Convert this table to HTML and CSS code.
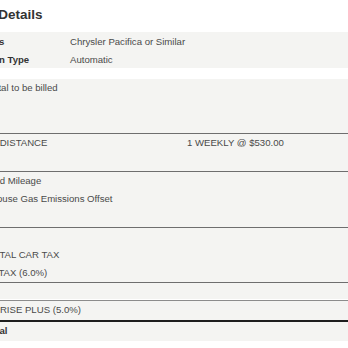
FILE: index.html
```html
<!DOCTYPE html>
<html lang="en">
<head>
<meta charset="utf-8">
<title>Vehicle Details</title>
<link rel="stylesheet" href="styles.css">
</head>
<body>
<div class="page">
  <h2 class="title">Vehicle Details</h2>

  <div class="panel vehicle">
    <div class="label strong">Vehicle Class</div>
    <div class="value">Chrysler Pacifica or Similar</div>
    <div class="label strong">Transmission Type</div>
    <div class="value">Automatic</div>
  </div>

  <div class="panel charges">
    <div class="summary">Final Total to be billed</div>

    <div class="group">
      <div class="row"><span class="label">TIME &amp; DISTANCE</span><span class="value">1 WEEKLY @ $530.00</span></div>
      <div class="row blank tall"></div>
    </div>

    <div class="group">
      <div class="row"><span class="label">Unlimited Mileage</span><span class="value"></span></div>
      <div class="row"><span class="label">Greenhouse Gas Emissions Offset</span><span class="value"></span></div>
      <div class="row blank tall"></div>
    </div>

    <div class="group">
      <div class="row blank"></div>
      <div class="row"><span class="label">PA RENTAL CAR TAX</span><span class="value"></span></div>
      <div class="row"><span class="label">SALES TAX (6.0%)</span><span class="value"></span></div>
    </div>

    <div class="group">
      <div class="row blank short"></div>
    </div>

    <div class="group g-fee">
      <div class="row tall"><span class="label fee">ENTERPRISE PLUS (5.0%)</span><span class="value"></span></div>
    </div>

    <div class="group g-total">
      <div class="row"><span class="label strong">Est. Total</span><span class="value"></span></div>
    </div>
  </div>
</div>
</body>
</html>
```
FILE: styles.css
```css
html, body {
  margin: 0;
  padding: 0;
  overflow: hidden;
  background: #ffffff;
}

.page {
  margin-left: -57px;
  width: 560px;
  font-family: "Liberation Sans", Arial, Helvetica, sans-serif;
  font-size: 9.6px;
  color: #4a4a4a;
}

.title {
  margin: 0;
  padding: 7px 0 0 5px;
  font-size: 13.5px;
  line-height: 15px;
  font-weight: bold;
  color: #333333;
}

.panel {
  background: #f4f4f2;
}

.vehicle {
  margin-top: 10px;
  display: grid;
  grid-template-columns: 127px 1fr;
  grid-auto-rows: 18px;
  align-items: center;
}

.strong {
  font-weight: bold;
  color: #333333;
}

.charges {
  margin-top: 11px;
  padding: 0 0 1px 22px;
}

.summary {
  height: 18px;
  line-height: 18px;
  margin-bottom: 36px;
}

.group {
  border-top: 1px solid #6e6e6e;
}

.row {
  display: grid;
  grid-template-columns: 222px 1fr;
  height: 18px;
  line-height: 18px;
}

.row.tall {
  height: 19px;
}

.row.short {
  height: 17px;
}

.fee {
  margin-left: -4px;
}

.g-fee {
  border-top: 1px solid #8c8c8c;
  box-shadow: 0 -1px 0 #ffffff;
}

.g-total {
  border-top: 2px solid #1e1e1e;
}
```
